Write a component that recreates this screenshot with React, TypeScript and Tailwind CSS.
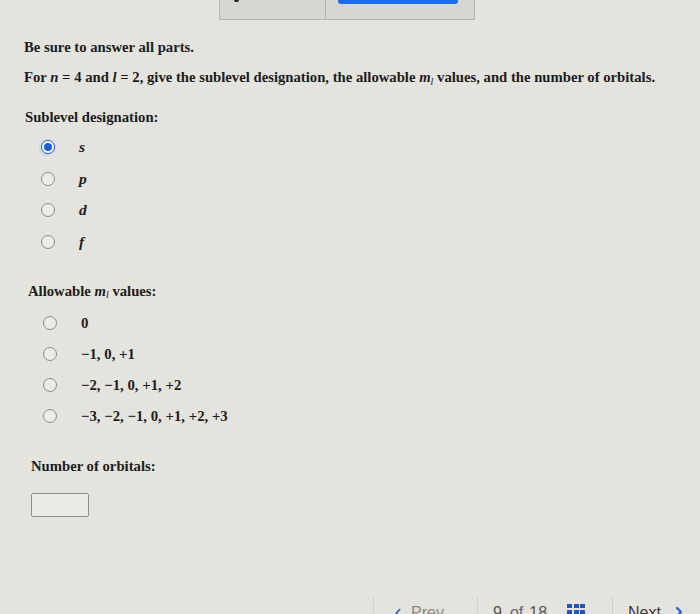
import React from "react";
import { ChevronLeft, ChevronRight } from "lucide-react";

/* -------------------- Bits -------------------- */

type RadioProps = { checked?: boolean };

const Radio: React.FC<RadioProps> = ({ checked = false }) =>
  checked ? (
    <span className="flex items-center justify-center w-[17px] h-[17px] rounded-full bg-[#c9d6f2]">
      <span className="flex items-center justify-center w-[14px] h-[14px] rounded-full border-[1.5px] border-[#1f5fd6] bg-white">
        <span className="w-[8px] h-[8px] rounded-full bg-[#1f5fd6]" />
      </span>
    </span>
  ) : (
    <span className="flex items-center justify-center w-[17px] h-[17px]">
      <span className="w-[14px] h-[14px] rounded-full border border-[#8c8b88] bg-[#ecebe7]" />
    </span>
  );

const Ml: React.FC = () => (
  <span className="italic">
    m<sub className="text-[10px] font-normal italic">l</sub>
  </span>
);

type OptionProps = {
  checked?: boolean;
  indent: string;
  children: React.ReactNode;
};

const Option: React.FC<OptionProps> = ({ checked, indent, children }) => (
  <div className={`flex items-center h-[20px] ${indent}`}>
    <Radio checked={checked} />
    <div className="ml-[23px] font-bold text-[14.8px]">{children}</div>
  </div>
);

/* -------------------- Main -------------------- */

const sublevels = ["s", "p", "d", "f"];
const mlValues = [
  "0",
  "\u22121, 0, +1",
  "\u22122, \u22121, 0, +1, +2",
  "\u22123, \u22122, \u22121, 0, +1, +2, +3",
];

export default function App() {
  return (
    <div className="w-[700px] h-[614px] overflow-hidden bg-[#e5e3de] text-[#1c1c1c] font-['Liberation_Serif',serif] leading-[20px]">
      {/* top tab remnant */}
      <div className="ml-[219px] w-[256px] h-[20px] flex border border-t-0 border-[#b7b5b0] bg-[#d8d6d1]">
        <div className="w-[106px] border-r border-[#b7b5b0] relative">
          <span className="absolute left-[14px] -top-[2px] w-[5px] h-[4px] rounded-full bg-[#222]" />
        </div>
        <div className="flex-1">
          <div className="ml-[12px] w-[120px] h-[4px] rounded-b-[3px] bg-[#1b6fe3]" />
        </div>
      </div>

      <p className="mt-[17px] pl-[24px] font-bold text-[14.7px]">
        Be sure to answer all parts.
      </p>
      <p className="mt-[10px] pl-[24px] font-bold text-[14.7px]">
        For <span className="italic">n</span> = 4 and{" "}
        <span className="italic">l</span> = 2, give the sublevel designation,
        the allowable <Ml /> values, and the number of orbitals.
      </p>

      <p className="mt-[20px] pl-[25px] font-bold text-[14.7px]">
        Sublevel designation:
      </p>
      <div className="mt-[10px] flex flex-col gap-[11.5px]">
        {sublevels.map((s, i) => (
          <Option key={s} checked={i === 0} indent="pl-[39px]">
            <span className="italic text-[15.5px]">{s}</span>
          </Option>
        ))}
      </div>

      <p className="mt-[29px] pl-[28px] font-bold text-[14.7px]">
        Allowable <Ml /> values:
      </p>
      <div className="mt-[12px] flex flex-col gap-[11.3px]">
        {mlValues.map((v) => (
          <Option key={v} indent="pl-[41px]">
            {v}
          </Option>
        ))}
      </div>

      <p className="mt-[30px] pl-[31px] font-bold text-[14.7px]">
        Number of orbitals:
      </p>
      <div className="mt-[17px] ml-[31px] w-[58px] h-[24px] border border-[#8f8e8a] rounded-[2px] bg-[#eceae6]" />

      {/* bottom nav, cut off by the photo */}
      <div className="mt-[80px] h-[30px] flex items-start font-['Liberation_Sans',sans-serif] text-[16px] leading-[20px]">
        <div className="ml-[373px] w-[104px] h-full border-l border-[#d2d0cb] flex items-start pt-[6px]">
          <ChevronLeft className="ml-[17px] mt-[3px] w-[14px] h-[14px] text-[#2a5fc4]" strokeWidth={3} />
          <span className="ml-[6px] text-[#8a8986]">Prev</span>
        </div>
        <div className="w-[136px] h-full border-l border-r border-[#d2d0cb] flex items-start pt-[6px]">
          <span className="ml-[15px] text-[#555]">9</span>
          <span className="ml-[8px] text-[#666]">of</span>
          <span className="ml-[6px] text-[#555]">18</span>
          <span className="ml-[20px] mt-[1px] grid grid-cols-3 gap-[1.5px]">
            {Array.from({ length: 9 }).map((_, i) => (
              <span key={i} className="w-[5px] h-[4px] bg-[#1f55c0]" />
            ))}
          </span>
        </div>
        <div className="flex items-start pt-[6px]">
          <span className="ml-[15px] text-[#3a3a3a]">Next</span>
          <ChevronRight className="ml-[10px] mt-[1px] w-[16px] h-[16px] text-[#1f5fd6]" strokeWidth={3.2} />
        </div>
      </div>
    </div>
  );
}
